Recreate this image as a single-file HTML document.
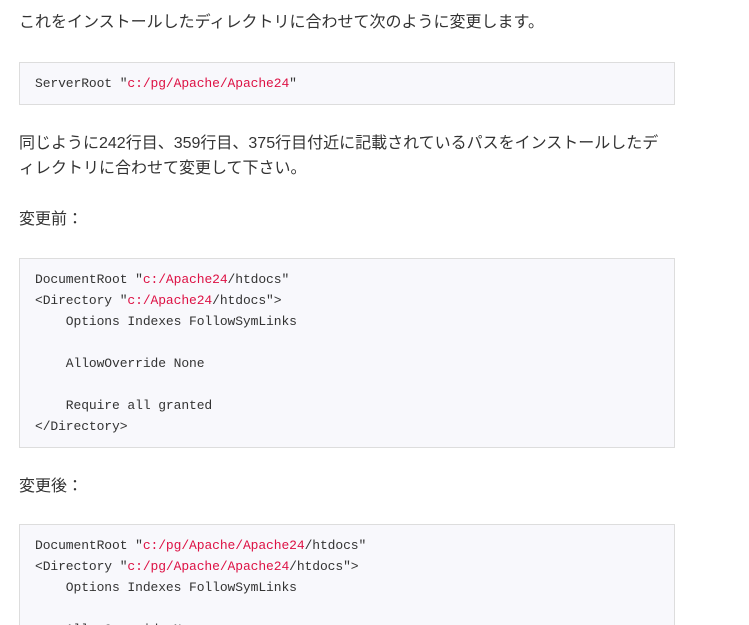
<!DOCTYPE html>
<html style="height:625px;overflow:hidden"><head><meta charset="utf-8"><style>
body{margin:0;background:#fff;width:749px;height:625px;overflow:hidden;position:relative;font-family:"Liberation Sans","Noto Sans CJK JP",sans-serif;color:#333;font-size:16px}
.t{position:absolute;left:19px;line-height:25px;white-space:nowrap}
.c{position:absolute;left:19px;width:656px;background:#f8f8fc;border:1px solid #ddd;padding:10px 0 10px 15px;box-sizing:border-box;font-family:"Liberation Mono",monospace;font-size:13px;line-height:21px;white-space:pre;color:#333;letter-spacing:-0.1px}
.r{color:#dd1144}
</style></head><body>
<div class="t" style="top:10px">これをインストールしたディレクトリに合わせて次のように変更します。</div>
<div class="c" style="top:62px;height:43px">ServerRoot "<span class="r">c:/pg/Apache/Apache24</span>"</div>
<div class="t" style="top:131px">同じように242行目、359行目、375行目付近に記載されているパスをインストールしたデ<br>ィレクトリに合わせて変更して下さい。</div>
<div class="t" style="top:207px">変更前：</div>
<div class="c" style="top:258px;height:190px">DocumentRoot "<span class="r">c:/Apache24</span>/htdocs"
&lt;Directory "<span class="r">c:/Apache24</span>/htdocs"&gt;
    Options Indexes FollowSymLinks

    AllowOverride None

    Require all granted
&lt;/Directory&gt;</div>
<div class="t" style="top:474px">変更後：</div>
<div class="c" style="top:524px;height:120px">DocumentRoot "<span class="r">c:/pg/Apache/Apache24</span>/htdocs"
&lt;Directory "<span class="r">c:/pg/Apache/Apache24</span>/htdocs"&gt;
    Options Indexes FollowSymLinks

    AllowOverride None</div>
</body></html>
